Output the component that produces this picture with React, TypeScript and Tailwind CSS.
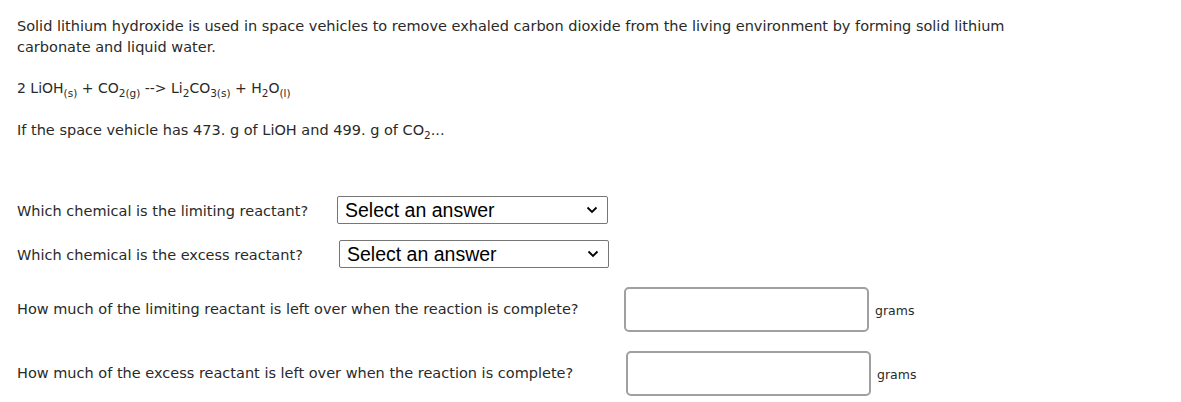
import React from "react";

const font = { fontFamily: '"DejaVu Sans", sans-serif' };

function Chevron() {
  return (
    <svg width="12" height="8" viewBox="0 0 12 8" className="absolute right-[9px] top-1/2 -translate-y-1/2">
      <path d="M1.5 1.5 L6 6 L10.5 1.5" fill="none" stroke="#000" strokeWidth="1.8" />
    </svg>
  );
}

function Select({ className }: { className: string }) {
  return (
    <div className={`relative bg-white border border-[#767676] rounded-[2px] ${className}`}>
      <span className="block pl-[7px] text-[19.5px] leading-[26px] text-black" style={{ fontFamily: '"Liberation Sans", Arial, sans-serif' }}>
        Select an answer
      </span>
      <Chevron />
    </div>
  );
}

function Sub({ children }: { children: React.ReactNode }) {
  return <sub className="text-[10.5px] relative top-[4px] align-baseline">{children}</sub>;
}

export default function App() {
  return (
    <div className="w-[1181px] h-[402px] bg-white text-[#2a2a2a] text-[14.5px]" style={font}>
      <div className="pl-[17px] pt-[16px]">
        <p className="leading-[21px] w-[1008px]">
          Solid lithium hydroxide is used in space vehicles to remove exhaled carbon dioxide from the living environment by forming solid lithium carbonate and liquid water.
        </p>
        <p className="mt-[20px] leading-[21px] text-[14px]">
          2 LiOH<Sub>(s)</Sub> + CO<Sub>2(g)</Sub> --&gt; Li<Sub>2</Sub>CO<Sub>3(s)</Sub> + H<Sub>2</Sub>O<Sub>(l)</Sub>
        </p>
        <p className="mt-[21px] leading-[21px]">
          If the space vehicle has 473. g of LiOH and 499. g of CO<Sub>2</Sub>...
        </p>

        <div className="mt-[55px] flex items-center">
          <span className="w-[320px] pt-[4px]">Which chemical is the limiting reactant?</span>
          <Select className="w-[271px] h-[28px]" />
        </div>
        <div className="mt-[16px] flex items-center">
          <span className="w-[322px] pt-[4px]">Which chemical is the excess reactant?</span>
          <Select className="w-[270px] h-[28px]" />
        </div>

        <div className="mt-[19px] flex items-center">
          <span className="w-[607px]">How much of the limiting reactant is left over when the reaction is complete?</span>
          <div className="w-[245px] h-[45px] border-2 border-[#a0a0a0] rounded-[5px] bg-white" />
          <span className="ml-[6px] pt-[3px] text-[12.5px]">grams</span>
        </div>
        <div className="mt-[19px] flex items-center">
          <span className="w-[609px]">How much of the excess reactant is left over when the reaction is complete?</span>
          <div className="w-[245px] h-[45px] border-2 border-[#a0a0a0] rounded-[5px] bg-white" />
          <span className="ml-[6px] pt-[3px] text-[12.5px]">grams</span>
        </div>
      </div>
    </div>
  );
}
